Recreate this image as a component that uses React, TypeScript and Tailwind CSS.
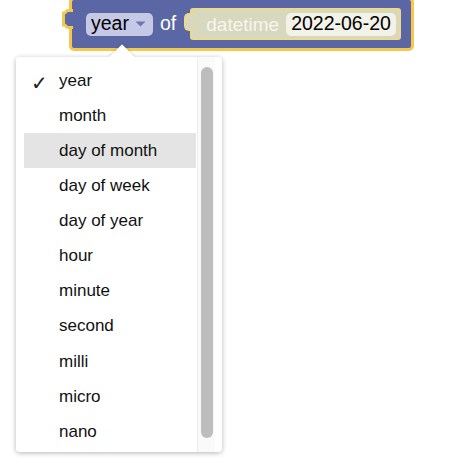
import React from "react";

const units = [
  "year",
  "month",
  "day of month",
  "day of week",
  "day of year",
  "hour",
  "minute",
  "second",
  "milli",
  "micro",
  "nano",
];

const App = () => {
  const selected = "year";
  const hovered = "day of month";

  return (
    <div
      className="relative w-[474px] h-[466px] bg-white overflow-hidden"
      style={{ fontFamily: '"Liberation Sans", Arial, sans-serif' }}
    >
      {/* block on the workspace */}
      <div className="absolute left-[69px] top-[-3px]">
        {/* output tab */}
        <svg className="absolute left-[-7px] top-[12px]" width="11" height="20" viewBox="0 0 11 20">
          <path
            d="M11 1.5 H6 C4 1.5 4 4 2.5 4 C1 4 1.5 3 1.5 6 V14 C1.5 17 1 16 2.5 16 C4 16 4 18.5 6 18.5 H11"
            fill="#5b67a5"
            stroke="#f5c84c"
            strokeWidth="3"
          />
        </svg>
        <div className="flex items-center w-[345px] h-[54px] bg-[#5b67a5] border-[3px] border-[#f5c84c] rounded-[5px] pl-[14px] pr-[10px]">
          <div className="flex items-center h-[23px] w-[67px] rounded-[5px] bg-[#c6c9e6] pl-[5px] gap-[6px]">
            <span className="text-[19.5px] leading-none text-black">year</span>
            <svg width="11" height="6" viewBox="0 0 11 6">
              <path d="M0.5 0.5 H10.5 L5.5 5.5 Z" fill="#6b76b5" />
            </svg>
          </div>
          <span className="ml-[7px] text-[19.5px] leading-none text-white">of</span>
          {/* inner datetime block */}
          <div className="relative ml-[14px] flex-1 self-stretch my-[8px]">
            <div className="absolute left-[-6px] top-[5px] w-[10px] h-[18px] rounded-l-[5px] bg-[#d8d8be] border-[2px] border-r-0 border-[#ecd98c]" />
            <div className="flex items-center h-full bg-[#d8d8be] border-[2px] border-[#ecd98c] rounded-[3px] pl-[14px] pr-[2px]">
              <span className="text-[19px] leading-none text-[#f6f6ee]">datetime</span>
              <div className="ml-[7px] flex items-center h-[23px] px-[5px] rounded-[5px] bg-[#f2f2e9]">
                <span className="text-[19.5px] leading-none text-black">2022-06-20</span>
              </div>
            </div>
          </div>
        </div>
      </div>

      {/* dropdown menu */}
      <div className="absolute left-[16px] top-[57px] w-[206px] h-[395px] bg-white rounded-[4px] shadow-[0_1px_5px_rgba(0,0,0,0.3)]">
        <div className="absolute left-[97px] top-[-9px] w-[18px] h-[18px] rotate-45 bg-white shadow-[-1px_-1px_2px_rgba(0,0,0,0.12)]" />
        <div className="relative flex h-full bg-white rounded-[4px] pl-[8px] pt-[6px]">
          <ul className="flex flex-col w-[172px]">
            {units.map((u) => (
              <li
                key={u}
                className={`relative flex items-center h-[35.1px] pl-[35px] text-[17px] text-[#111] ${
                  u === hovered ? "bg-[#e4e4e4]" : ""
                }`}
              >
                {u === selected && (
                  <span className="absolute left-[7px] top-[5px] text-[20px] text-[#222]">✓</span>
                )}
                {u}
              </li>
            ))}
          </ul>
          <div className="ml-[1px] mt-[-6px] w-[18px] h-[395px] border-l border-[#ededed] bg-[#fafafa] flex justify-center pt-[10px]">
            <div className="w-[12px] h-[371px] rounded-full bg-[#bdbdbd]" />
          </div>
        </div>
      </div>
    </div>
  );
};

export default App;
